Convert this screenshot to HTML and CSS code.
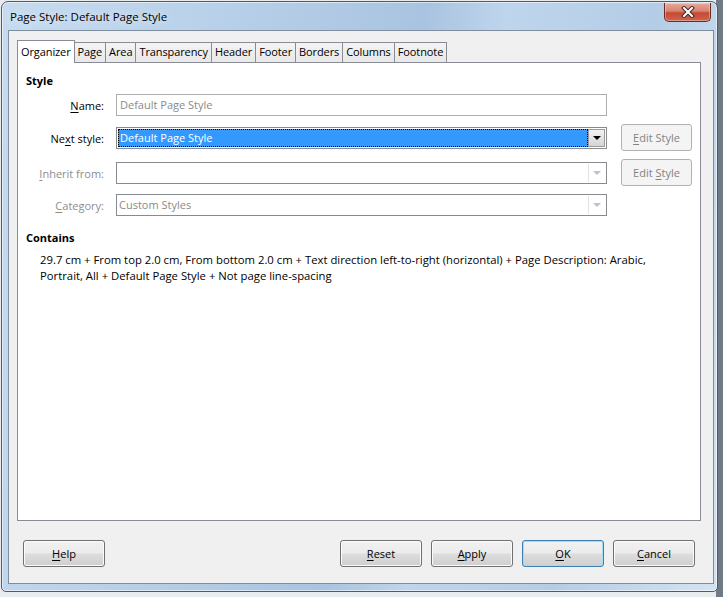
FILE: index.html
```html
<!DOCTYPE html>
<html lang="en">
<head>
  <meta charset="UTF-8">
  <title>Page Style: Default Page Style</title>
  <link rel="stylesheet" href="styles.css">
</head>
<body>

<div class="window">
  <!-- Title bar -->
  <div class="titlebar">
    <span class="title">Page Style: Default Page Style</span>
    <button class="close-btn" title="Close">
      <svg width="14" height="12" viewBox="0 0 14 12">
        <path d="M3 2 L11 10 M11 2 L3 10" stroke="#3b2a26" stroke-width="4" stroke-linecap="square"/>
        <path d="M3 2 L11 10 M11 2 L3 10" stroke="#ffffff" stroke-width="2" stroke-linecap="square"/>
      </svg>
    </button>
  </div>

  <div class="client">
    <!-- Tabs -->
    <div class="tabs">
      <div class="tab active">Organizer</div>
      <div class="tab">Page</div>
      <div class="tab">Area</div>
      <div class="tab">Transparency</div>
      <div class="tab">Header</div>
      <div class="tab">Footer</div>
      <div class="tab">Borders</div>
      <div class="tab">Columns</div>
      <div class="tab">Footnote</div>
    </div>

    <div class="panel">
      <h3 class="section-title">Style</h3>

      <div class="style-grid">
        <label class="field-label"><u>N</u>ame:</label>
        <div class="field readonly">Default Page Style</div>
        <span></span>

        <label class="field-label">Ne<u>x</u>t style:</label>
        <div class="combo focused">
          <span class="combo-value"><span class="selection">Default Page Style</span></span>
          <span class="combo-arrow"><i class="tri"></i></span>
        </div>
        <button class="btn edit-btn" disabled><u>E</u>dit Style</button>

        <label class="field-label disabled"><u>I</u>nherit from:</label>
        <div class="combo disabled">
          <span class="combo-value"></span>
          <span class="combo-arrow"><i class="tri"></i></span>
        </div>
        <button class="btn edit-btn" disabled>Edit <u>S</u>tyle</button>

        <label class="field-label disabled"><u>C</u>ategory:</label>
        <div class="combo disabled">
          <span class="combo-value">Custom Styles</span>
          <span class="combo-arrow"><i class="tri"></i></span>
        </div>
        <span></span>
      </div>

      <h3 class="section-title contains-title">Contains</h3>
      <p class="contains-text">29.7 cm + From top 2.0 cm, From bottom 2.0 cm + Text direction left-to-right (horizontal) + Page Description: Arabic,<br>Portrait, All + Default Page Style + Not page line-spacing</p>
    </div>

    <!-- Dialog buttons -->
    <div class="button-row">
      <button class="btn help-btn"><u>H</u>elp</button>
      <button class="btn"><u>R</u>eset</button>
      <button class="btn"><u>A</u>pply</button>
      <button class="btn default"><u>O</u>K</button>
      <button class="btn"><u>C</u>ancel</button>
    </div>
  </div>
</div>

</body>
</html>
```

FILE: styles.css
```css
* {
  box-sizing: border-box;
}
body {
  margin: 0;
  width: 723px;
  height: 597px;
  overflow: hidden;
  background: linear-gradient(90deg, #e9ecef 0%, #e9ecef 99%, #6f7a86 99%);
  font-family: "Open Sans", "Noto Sans", sans-serif;
  font-size: 11px;
  color: #000;
}
u {
  text-decoration: underline;
  text-underline-offset: 2px;
}

/* window frame */
.window {
  margin: 1px 0 0 1px;
  width: 717px;
  height: 591px;
  border: 1px solid #4d5b6a;
  border-radius: 7px 7px 5px 5px;
  background: linear-gradient(100deg, #c6dbef 0%, #b6cfe8 30%, #a9c4e0 52%, #bed5ec 62%, #b4cde6 80%, #d3e3f3 100%);
  display: flex;
  flex-direction: column;
  padding: 0 3px 7px 6px;
  box-shadow: inset 0 0 0 1px rgba(255,255,255,0.55);
}
.titlebar {
  height: 28px;
  display: flex;
  justify-content: space-between;
  align-items: flex-start;
}
.title {
  padding: 7px 0 0 2px;
  font-size: 11.5px;
  line-height: 16px;
  color: #000;
  text-shadow: 0 0 8px rgba(255,255,255,0.9);
}
.close-btn {
  margin: 1px 3px 0 0;
  width: 47px;
  height: 19px;
  border: 1px solid #6b2a20;
  border-top: none;
  border-radius: 0 0 5px 5px;
  background: linear-gradient(#e9a99a 0%, #d88370 45%, #c44a33 55%, #cf634d 100%);
  box-shadow: inset 0 0 0 1px rgba(255,255,255,0.35);
  display: flex;
  align-items: center;
  justify-content: center;
  padding: 0;
}

/* dialog client area */
.client {
  flex: 1;
  border: 1px solid #7f8e9f;
  background: #f0f0f0;
  display: flex;
  flex-direction: column;
}
.tabs {
  margin: 9px 0 -1px 8px;
  height: 23px;
  display: flex;
  align-items: flex-end;
  position: relative;
  z-index: 1;
}
.tab {
  height: 20px;
  margin-bottom: 1px;
  margin-right: -1px;
  padding: 1px 3px 0 3px;
  border: 1px solid #898c95;
  border-bottom: none;
  background: linear-gradient(#f3f3f3, #e8e8e8);
  line-height: 16px;
  white-space: nowrap;
  letter-spacing: -0.1px;
}
.tab.active {
  height: 23px;
  margin-bottom: 0;
  padding-top: 3px;
  background: #fff;
  position: relative;
  z-index: 2;
}
.panel {
  margin: 0 12px 0 8px;
  height: 459px;
  border: 1px solid #898c95;
  background: #fff;
  padding: 10px 0 0 8px;
}
.section-title {
  margin: 0;
  font-size: 11px;
  font-weight: bold;
  line-height: 16px;
}

/* form */
.style-grid {
  margin-top: 5px;
  display: grid;
  grid-template-columns: 78px 491px 73px;
  grid-template-rows: 22px 27px 27px 22px;
  column-gap: 12px;
  row-gap: 8px;
  align-items: center;
}
.field-label {
  text-align: right;
  white-space: nowrap;
  padding-top: 1px;
}
.field-label.disabled {
  color: #8d8d8d;
}
.field {
  height: 22px;
  border: 1px solid #abadb3;
  background: #fff;
  padding: 0 3px;
  color: #8a8a8a;
  line-height: 20px;
}
.combo {
  height: 22px;
  border: 1px solid #878a8e;
  background: #fff;
  display: flex;
  padding: 1px;
}
.combo-value {
  flex: 1;
  line-height: 18px;
  padding-left: 1px;
  color: #8a8a8a;
}
.selection {
  display: block;
  height: 18px;
  background: #3399ff;
  color: #fff;
  border: 1px dotted #000;
  line-height: 16px;
  padding-left: 1px;
}
.combo.focused .combo-value {
  padding-left: 0;
}
.combo-arrow {
  width: 17px;
  display: flex;
  align-items: center;
  justify-content: center;
  border-left: 1px solid #e2e2e2;
}
.combo.focused .combo-arrow {
  border: 1px solid #9a9a9a;
  background: linear-gradient(#f2f2f2, #d5d5d5);
}
.tri {
  width: 0;
  height: 0;
  border-left: 4px solid transparent;
  border-right: 4px solid transparent;
  border-top: 4px solid #c2c2c2;
}
.combo.focused .tri {
  border-top-color: #000;
}
.contains-title {
  margin-top: 14px;
}
.contains-text {
  margin: 6px 0 0 14px;
  font-size: 11.3px;
  line-height: 16px;
  white-space: nowrap;
}

/* buttons */
.btn {
  width: 82px;
  height: 27px;
  padding: 0;
  border: 1px solid #707070;
  border-radius: 3px;
  background: linear-gradient(#f2f2f2 0%, #ebebeb 48%, #dddddd 52%, #cfcfcf 100%);
  box-shadow: inset 0 0 0 1px #fbfbfb;
  font-family: inherit;
  font-size: 11px;
  color: #000;
}
.btn.default {
  border-color: #3c7fb1;
  box-shadow: inset 0 0 0 1px #a6dbf6;
}
.edit-btn {
  width: 71px;
  justify-self: end;
  border-color: #adb2b5;
  background: #f4f4f4;
  box-shadow: none;
  color: #838383;
}
.button-row {
  margin: 19px 18px 0 14px;
  display: flex;
  gap: 9px;
}
.help-btn {
  margin-right: auto;
}
```
